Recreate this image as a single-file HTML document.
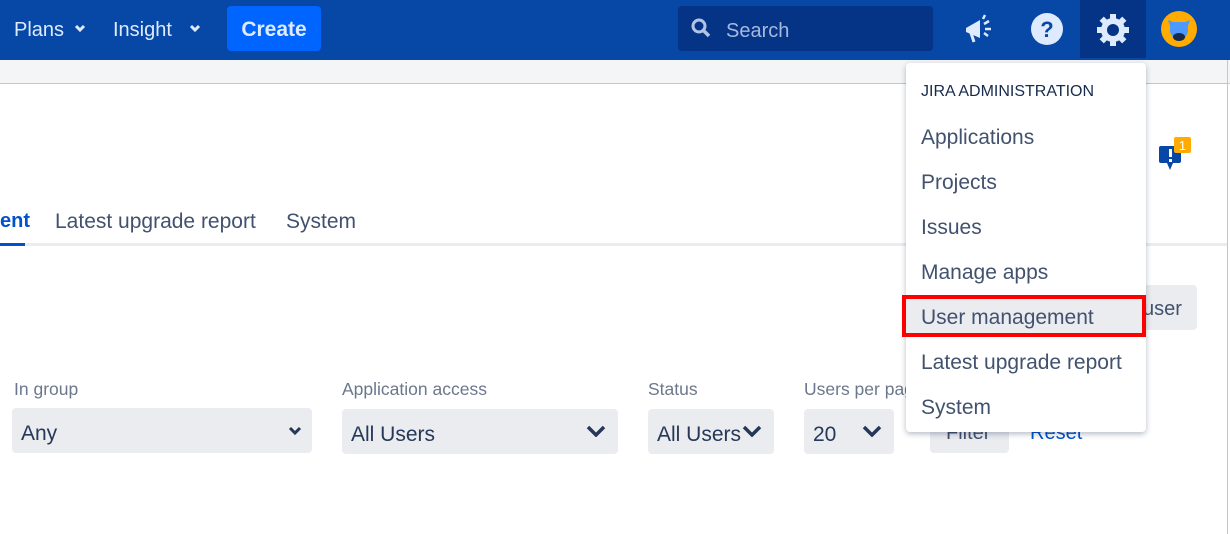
<!DOCTYPE html>
<html><head><meta charset="utf-8"><style>
*{box-sizing:border-box;margin:0;padding:0}
body{width:1230px;height:534px;overflow:hidden;background:#fff;font-family:"Liberation Sans",sans-serif;position:relative;color:#42526e}
.hdr{position:absolute;left:0;top:0;width:1230px;height:60px;background:#0747a6}
.abs{position:absolute}
.nav{color:#deebff;font-size:20px;top:19px}
.strip{position:absolute;top:60px;left:0;width:1230px;height:24px;background:#f4f5f7;border-bottom:1px solid #c1c7d0}
.lbl{position:absolute;font-size:17.5px;color:#6b778c;top:379px}
.sel{position:absolute;top:408px;height:45px;background:#ebecf0;border-radius:4px;font-size:21px;color:#253858;padding:14px 9px 0}
.menu{position:absolute;left:906px;top:63px;width:240px;height:369px;background:#fff;border-radius:4px;box-shadow:0 2px 6px rgba(9,30,66,.3)}
.mi{position:absolute;left:15px;font-size:21px;color:#42526e}
</style></head><body>
<div class="hdr"></div>
<div class="abs nav" style="left:14px">Plans</div>
<svg class="abs" style="left:74px;top:24px" width="12" height="10"><path d="M2 2l4 4 4-4" stroke="#deebff" stroke-width="3" fill="none"/></svg>
<div class="abs nav" style="left:113px">Insight</div>
<svg class="abs" style="left:189px;top:24px" width="12" height="10"><path d="M2 2l4 4 4-4" stroke="#deebff" stroke-width="3" fill="none"/></svg>
<div class="abs" style="left:227px;top:6px;width:94px;height:45px;background:#0065ff;border-radius:4px;color:#deebff;font-size:21px;font-weight:bold;text-align:center;line-height:48px">Create</div>
<div class="abs" style="left:678px;top:6px;width:255px;height:45px;background:#053487;border-radius:4px"></div>
<svg class="abs" style="left:690px;top:17px" width="24" height="24"><circle cx="9" cy="9" r="6" stroke="#b3c4e0" stroke-width="3" fill="none"/><path d="M13 13l6 6" stroke="#b3c4e0" stroke-width="3.5"/></svg>
<div class="abs" style="left:726px;top:20px;color:#a6b9dd;font-size:20px">Search</div>
<svg class="abs" style="left:962px;top:12px" width="36" height="34"><path d="M4 16l14-8v18L4 20z" fill="#deebff"/><path d="M9 21l3 9" stroke="#deebff" stroke-width="3"/><path d="M22 12l5-3M23 17h6M22 21l4 3M21 7l2-4" stroke="#deebff" stroke-width="2.5"/></svg>
<svg class="abs" style="left:1030px;top:12px" width="34" height="34"><circle cx="17" cy="17" r="16" fill="#deebff"/><text x="17" y="25" text-anchor="middle" font-size="22" font-weight="bold" fill="#0747a6" font-family="Liberation Sans">?</text></svg>
<div class="abs" style="left:1080px;top:0;width:66px;height:58px;background:#053487"></div>
<svg class="abs" style="left:1095px;top:12px" width="36" height="36" viewBox="0 0 36 36"><g fill="#deebff"><circle cx="18" cy="18" r="12"/><g><rect x="15" y="2" width="6" height="8"/><rect x="15" y="26" width="6" height="8"/><rect x="2" y="15" width="8" height="6"/><rect x="26" y="15" width="8" height="6"/></g><g transform="rotate(45 18 18)"><rect x="15" y="2" width="6" height="8"/><rect x="15" y="26" width="6" height="8"/><rect x="2" y="15" width="8" height="6"/><rect x="26" y="15" width="8" height="6"/></g></g><circle cx="18" cy="18" r="6" fill="#053487"/></svg>
<svg class="abs" style="left:1160px;top:10px" width="38" height="38"><circle cx="19" cy="19" r="18" fill="#ffab00"/><path d="M8 10l5 2h12l5-2-2 6v6l-3 6H13l-3-6v-6z" fill="#4c9aff"/><ellipse cx="19" cy="27" rx="6" ry="4" fill="#172b4d"/></svg>
<div class="strip"></div>
<div class="abs" style="left:1227px;top:60px;width:1px;height:474px;background:#c1c7d0"></div>
<svg class="abs" style="left:1157px;top:136px" width="36" height="36"><rect x="2" y="10" width="22" height="17" rx="2" fill="#0747a6"/><path d="M10 27l3 7 3-7z" fill="#0747a6"/><rect x="12" y="13" width="3" height="8" fill="#fff"/><rect x="12" y="23" width="3" height="3" fill="#fff"/><rect x="17" y="1" width="17" height="16" rx="2" fill="#ffab00"/><text x="25.5" y="14" text-anchor="middle" font-size="13" fill="#fff" font-family="Liberation Sans">1</text></svg>
<div class="abs" style="left:0;top:210px;font-size:20px;color:#0052cc;font-weight:bold">ent</div>
<div class="abs" style="left:55px;top:210px;font-size:21px">Latest upgrade report</div>
<div class="abs" style="left:286px;top:210px;font-size:21px">System</div>
<div class="abs" style="left:0;top:243px;width:1227px;height:3px;background:#ebecf0"></div>
<div class="abs" style="left:0;top:243px;width:25px;height:3px;background:#0052cc"></div>
<div class="abs" style="left:1100px;top:285px;width:97px;height:45px;background:#ebecf0;border-radius:4px;font-size:20px;color:#42526e;padding:13px 0 0 43px">user</div>
<div class="lbl" style="left:14px">In group</div>
<div class="lbl" style="left:342px">Application access</div>
<div class="lbl" style="left:648px">Status</div>
<div class="lbl" style="left:804px">Users per page</div>
<div class="sel" style="left:12px;width:300px">Any<svg style="position:absolute;right:10px;top:18px" width="14" height="10"><path d="M2 2l5 5 5-5" stroke="#253858" stroke-width="3" fill="none"/></svg></div>
<div class="sel" style="left:342px;width:276px;top:409px">All Users<svg style="position:absolute;right:12px;top:16px" width="20" height="12"><path d="M2 2l8 8 8-8" stroke="#253858" stroke-width="3.5" fill="none"/></svg></div>
<div class="sel" style="left:648px;width:126px;top:409px">All Users<svg style="position:absolute;right:12px;top:16px" width="20" height="12"><path d="M2 2l8 8 8-8" stroke="#253858" stroke-width="3.5" fill="none"/></svg></div>
<div class="sel" style="left:804px;width:90px;top:409px">20<svg style="position:absolute;right:12px;top:16px" width="20" height="12"><path d="M2 2l8 8 8-8" stroke="#253858" stroke-width="3.5" fill="none"/></svg></div>
<div class="abs" style="left:930px;top:409px;width:79px;height:44px;background:#ebecf0;border-radius:4px;font-size:20px;padding:13px 0 0 16px">Filter</div>
<div class="abs" style="left:1030px;top:422px;font-size:20px;color:#0052cc">Reset</div>
<div class="menu">
<div class="mi" style="top:20px;font-size:16px;color:#172b4d">JIRA ADMINISTRATION</div>
<div class="mi" style="top:63px">Applications</div>
<div class="mi" style="top:108px">Projects</div>
<div class="mi" style="top:153px">Issues</div>
<div class="mi" style="top:198px">Manage apps</div>
<div style="position:absolute;left:-4px;top:232px;width:244px;height:42px;background:#ebecf0;border:4px solid #ff0000"></div>
<div class="mi" style="top:243px">User management</div>
<div class="mi" style="top:288px">Latest upgrade report</div>
<div class="mi" style="top:333px">System</div>
</div>
</body></html>
